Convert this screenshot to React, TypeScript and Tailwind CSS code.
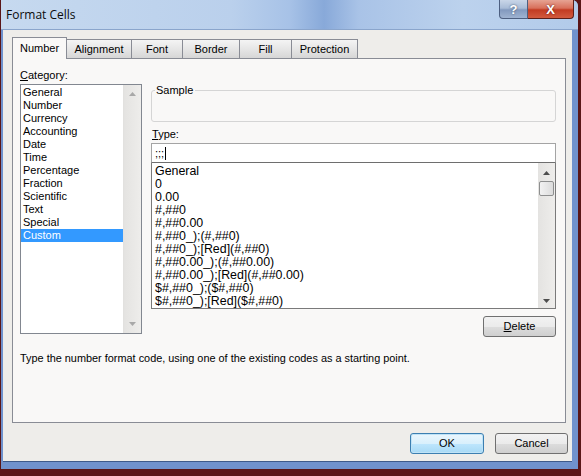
import React from "react";

const categories = [
  "General",
  "Number",
  "Currency",
  "Accounting",
  "Date",
  "Time",
  "Percentage",
  "Fraction",
  "Scientific",
  "Text",
  "Special",
  "Custom",
];

const types = [
  "General",
  "0",
  "0.00",
  "#,##0",
  "#,##0.00",
  "#,##0_);(#,##0)",
  "#,##0_);[Red](#,##0)",
  "#,##0.00_);(#,##0.00)",
  "#,##0.00_);[Red](#,##0.00)",
  "$#,##0_);($#,##0)",
  "$#,##0_);[Red]($#,##0)",
];

const tabs = [
  { label: "Number", w: "w-[55px]" },
  { label: "Alignment", w: "w-[65px]" },
  { label: "Font", w: "w-[51px]" },
  { label: "Border", w: "w-[57px]" },
  { label: "Fill", w: "w-[52px]" },
  { label: "Protection", w: "w-[66px]" },
];

function Arrow({ up, dark }: { up: boolean; dark: boolean }) {
  return (
    <svg width="7" height="4" viewBox="0 0 7 4">
      <path
        d={up ? "M0 4 L3.5 0 L7 4 Z" : "M0 0 L3.5 4 L7 0 Z"}
        fill={dark ? "#4d4d4d" : "#a8a8a8"}
      />
    </svg>
  );
}

export default function App() {
  return (
    <div className="w-[581px] h-[476px] bg-[#5a1618] overflow-hidden font-['Liberation_Sans',Arial,sans-serif] text-[11px] text-black leading-[13px]">
      <div className="ml-[1px] w-[577px] h-[469px] bg-[#7092cd] flex flex-col rounded-tr-[6px]">
        {/* Title bar */}
        <div className="h-[30px] flex items-start bg-[linear-gradient(90deg,#c6d9ef_0%,#bad0ec_40%,#a7c2e7_50%,#88a9d9_56%,#a9c3e7_62%,#bcd2ed_80%,#b2cbea_100%)] rounded-tr-[6px] border-b border-[#8aa5cc]">
          <div className="pl-[5px] pt-[7px] text-[12px] leading-[15px] font-['Open_Sans','Liberation_Sans',sans-serif] text-[#0b0b0b] flex-1">
            Format Cells
          </div>
          <div className="flex mr-[4px]">
            <div className="w-[29px] h-[19px] rounded-bl-[4px] border border-t-0 border-[#4d5f80] bg-[linear-gradient(180deg,#c9d6e8_0%,#a9bcd7_45%,#8299be_55%,#9fb3d1_100%)] flex items-center justify-center text-white font-bold text-[13px] [text-shadow:0_0_2px_#30445f]">
              ?
            </div>
            <div className="w-[46px] h-[19px] rounded-br-[4px] border border-t-0 border-l-0 border-[#5b1f1a] bg-[linear-gradient(180deg,#e6a393_0%,#d8705b_45%,#c23b22_55%,#d25a3f_100%)] flex items-center justify-center text-white font-bold text-[13px] [text-shadow:0_0_2px_#5a1410]">
              X
            </div>
          </div>
        </div>
        {/* Client */}
        <div className="ml-[2px] mr-[6px] h-[432px] bg-[#eeedea] border-b border-[#3e5a8a] flex flex-col">
          {/* Tabs */}
          <div className="ml-[9px] mt-[7px] h-[21px] flex items-end relative z-10">
            {tabs.map((t, i) =>
              i === 0 ? (
                <div
                  key={t.label}
                  className={`${t.w} h-[22px] -mb-[1px] bg-[#f9f8f7] border border-b-0 border-[#898c95] flex items-center justify-center pb-[1px]`}
                >
                  {t.label}
                </div>
              ) : (
                <div
                  key={t.label}
                  className={`${t.w} h-[19px] bg-[linear-gradient(180deg,#f4f4f4_0%,#e6e6e6_50%,#d6d6d6_100%)] border border-l-0 border-b-0 border-[#898c95] flex items-center justify-center pt-[1px]`}
                >
                  {t.label}
                </div>
              )
            )}
          </div>
          {/* Panel */}
          <div className="ml-[9px] mr-[6px] h-[365px] bg-[#f9f8f7] border border-[#898c95] pl-[7px] flex flex-col">
            <div className="flex gap-[9px] pt-[10px]">
              {/* Left column */}
              <div className="w-[122px] flex flex-col">
                <div className="h-[15px]">
                  <span className="underline underline-offset-[1px]">C</span>ategory:
                </div>
                <div className="h-[250px] border border-[#828790] bg-white flex">
                  <div className="flex-1 pt-[1px] flex flex-col">
                    {categories.map((c) => (
                      <div
                        key={c}
                        className={`h-[13px] pl-[2px] ${
                          c === "Custom" ? "bg-[#3399ff] text-white" : ""
                        }`}
                      >
                        {c}
                      </div>
                    ))}
                  </div>
                  <div className="w-[18px] bg-[linear-gradient(90deg,#e4e3e1_0%,#eeedeb_100%)] border-l border-[#e2e1df] flex flex-col items-center justify-between py-[7px]">
                    <Arrow up dark={false} />
                    <Arrow up={false} dark={false} />
                  </div>
                </div>
              </div>
              {/* Right column */}
              <div className="w-[405px] flex flex-col">
                <div className="mt-[21px] h-[32px] border border-[#d5d5d5] rounded-[3px] relative">
                  <div className="absolute left-[3px] -top-[7px] bg-[#f9f8f7] pr-[2px] pl-[1px]">
                    Sample
                  </div>
                </div>
                <div className="mt-[6px] h-[15px] pl-[1px]">
                  <span className="underline underline-offset-[1px]">T</span>ype:
                </div>
                <div className="h-[20px] bg-white border border-[#a4a4a4] border-b-[#6e6e6e] flex items-center pl-[3px]">
                  ;;;<span className="inline-block w-[1px] h-[13px] bg-black ml-[1px]"></span>
                </div>
                <div className="h-[146px] bg-white border border-t-0 border-[#7a7a7a] flex">
                  <div className="flex-1 pt-[2px] flex flex-col text-[12.4px]">
                    {types.map((t) => (
                      <div key={t} className="h-[13px] pl-[3px] whitespace-nowrap">
                        {t}
                      </div>
                    ))}
                  </div>
                  <div className="w-[17px] bg-[linear-gradient(90deg,#e4e3e1_0%,#eeedeb_100%)] flex flex-col items-center pt-[8px] pb-[5px]">
                    <Arrow up dark />
                    <div className="mt-[6px] w-[15px] h-[15px] border border-[#8e8f8f] rounded-[2px] bg-[linear-gradient(90deg,#f2f2f2_0%,#dcdcdc_100%)]"></div>
                    <div className="flex-1"></div>
                    <Arrow up={false} dark />
                  </div>
                </div>
                <div className="mt-[7px] flex justify-end">
                  <div className="w-[73px] h-[21px] border border-[#707070] rounded-[3px] bg-[linear-gradient(180deg,#f2f2f2_0%,#ebebeb_50%,#dddddd_51%,#cfcfcf_100%)] flex items-center justify-center">
                    <span className="underline underline-offset-[1px]">D</span>elete
                  </div>
                </div>
              </div>
            </div>
            <div className="mt-[15px] whitespace-nowrap text-[10.9px] leading-[13px]">
              Type the number format code, using one of the existing codes as a starting point.
            </div>
          </div>
          {/* Buttons */}
          <div className="mt-[10px] mr-[4px] flex justify-end gap-[11px]">
            <div className="w-[74px] h-[21px] border border-[#3c7fb1] rounded-[3px] bg-[linear-gradient(180deg,#eaf6fd_0%,#d9f0fc_50%,#bee6fd_51%,#a7d9f5_100%)] shadow-[inset_0_0_0_1px_#bfe3f7] flex items-center justify-center">
              OK
            </div>
            <div className="w-[73px] h-[21px] border border-[#707070] rounded-[3px] bg-[linear-gradient(180deg,#f2f2f2_0%,#ebebeb_50%,#dddddd_51%,#cfcfcf_100%)] flex items-center justify-center">
              Cancel
            </div>
          </div>
        </div>
      </div>
    </div>
  );
}
